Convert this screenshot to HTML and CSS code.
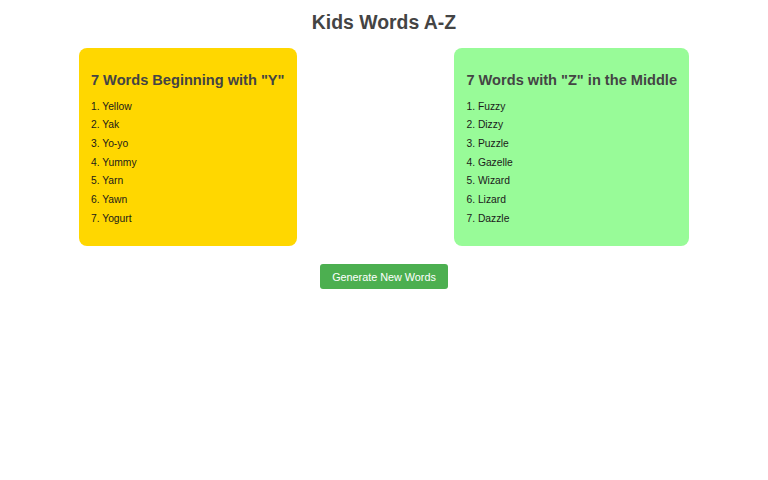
FILE: index.html
```html
<!DOCTYPE html>
<html lang="en">
<head>
<meta charset="utf-8">
<title>Kids Words A-Z</title>
<link rel="stylesheet" href="styles.css">
</head>
<body>
<h1 class="title">Kids Words A-Z</h1>
<div class="cards">
  <div class="card card-yellow">
    <h2 class="card-title">7 Words Beginning with "Y"</h2>
    <ul class="word-list">
      <li>1. Yellow</li>
      <li>2. Yak</li>
      <li>3. Yo-yo</li>
      <li>4. Yummy</li>
      <li>5. Yarn</li>
      <li>6. Yawn</li>
      <li>7. Yogurt</li>
    </ul>
  </div>
  <div class="card card-green">
    <h2 class="card-title">7 Words with "Z" in the Middle</h2>
    <ul class="word-list">
      <li>1. Fuzzy</li>
      <li>2. Dizzy</li>
      <li>3. Puzzle</li>
      <li>4. Gazelle</li>
      <li>5. Wizard</li>
      <li>6. Lizard</li>
      <li>7. Dazzle</li>
    </ul>
  </div>
</div>
<div class="actions">
  <button class="btn" type="button">Generate New Words</button>
</div>
</body>
</html>
```
FILE: styles.css
```css
html, body {
  margin: 0;
  background: #ffffff;
}
body {
  padding-top: 11px;
  font-family: "Liberation Sans", Arial, sans-serif;
  color: #222;
}
.title {
  margin: 0 0 15px;
  font-size: 19.4px;
  line-height: 22px;
  font-weight: bold;
  color: #444;
  text-align: center;
}
.cards {
  display: flex;
  justify-content: space-around;
  align-items: flex-start;
}
.card {
  padding: 12px;
  border-radius: 8px;
}
.card-yellow {
  background: #ffd700;
}
.card-green {
  background: #98fb98;
}
.card-title {
  margin: 12px 0;
  font-size: 14.6px;
  line-height: 16.5px;
  font-weight: bold;
  color: #444;
}
.word-list {
  list-style: none;
  margin: 0;
  padding: 0;
}
.word-list li {
  font-size: 10.3px;
  line-height: 11.5px;
  margin-bottom: 7.2px;
  color: #1a1a1a;
}
.word-list li:last-child {
  margin-bottom: 10px;
}
.actions {
  display: flex;
  justify-content: center;
  padding-top: 18px;
}
.btn {
  width: 128px;
  height: 25px;
  padding: 0;
  border: none;
  border-radius: 3px;
  background: #4caf50;
  color: #ffffff;
  font-family: "Liberation Sans", Arial, sans-serif;
  font-size: 10.8px;
  cursor: pointer;
}
```
